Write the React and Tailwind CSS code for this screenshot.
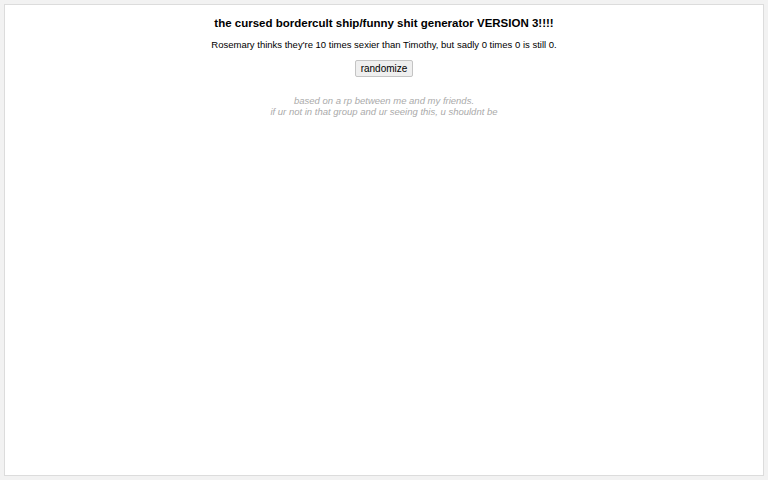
import React, { useState } from 'react';

const App = () => {
    const [line] = useState("Rosemary thinks they're 10 times sexier than Timothy, but sadly 0 times 0 is still 0.");

    return (
        <div className="h-[480px] bg-[#f2f2f2] p-[4px]" style={{ fontFamily: '"Liberation Sans", Arial, sans-serif' }}>
            <div className="h-full bg-white border border-[#dcdcdc] flex flex-col items-center pt-[10px]">
                <h1 className="text-[11.5px] font-bold text-black leading-[16px]">
                    the cursed bordercult ship/funny shit generator VERSION 3!!!!
                </h1>
                <p className="mt-[7px] text-[9.5px] text-black leading-[14px]">{line}</p>
                <button className="mt-[8px] h-[17px] flex items-center text-[10px] leading-[12px] px-[5px] bg-[#efefef] border border-[#c4c4c4] rounded-[2px] text-black">
                    randomize
                </button>
                <div className="mt-[18px] text-[9.5px] italic text-[#aaaaaa] leading-[11px] text-center">
                    <p>based on a rp between me and my friends.</p>
                    <p>if ur not in that group and ur seeing this, u shouldnt be</p>
                </div>
            </div>
        </div>
    );
};

export default App;
